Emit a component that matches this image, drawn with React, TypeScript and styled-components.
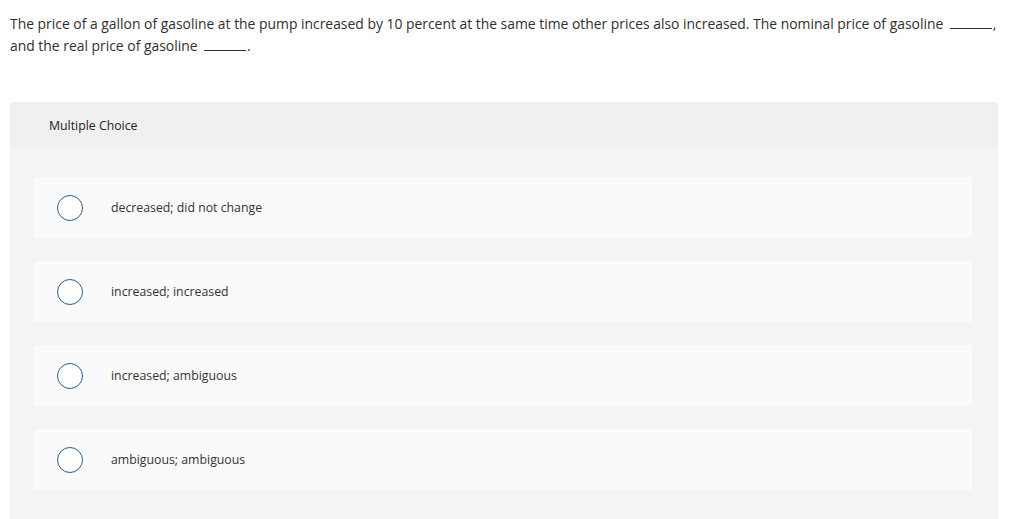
import React from 'react';
import styled, { createGlobalStyle } from 'styled-components';

const Global = createGlobalStyle`
    body {
        margin: 0;
        background: #fff;
        font-family: "Open Sans", "Liberation Sans", sans-serif;
        color: #333;
    }
`
const Page = styled.main`
    padding: 13px 10px 0 10px;
`
const Question = styled.p`
    margin: 0;
    font-size: 13.9px;
    line-height: 22px;
    color: #2f2f2f;
`
const Blank = styled.span`
    display: inline-block;
    width: 42px;
    border-bottom: 1px solid #333;
    margin: 0 1px 0 3px;
`
const Panel = styled.section`
    margin-top: 45px;
    width: 988px;
    background-color: #f4f4f4;
    padding-bottom: 40px;
`
const Header = styled.div`
    height: 46px;
    background-color: #f0f0f0;
    display: flex;
    align-items: center;
    padding-left: 39px;
    font-size: 12.3px;
    color: #222;
`
const Options = styled.ul`
    list-style: none;
    margin: 0;
    padding: 29px 26px 0 24px;
    display: flex;
    flex-direction: column;
    gap: 23px;
`
const Option = styled.li`
    height: 61px;
    background-color: #fafafa;
    border-radius: 3px;
    display: flex;
    align-items: center;
    padding-left: 23px;
    font-size: 12.3px;
    color: #333;
`
const Radio = styled.span`
    width: 24px;
    height: 24px;
    border-radius: 50%;
    border: 1.4px solid #2c5b8f;
    background: #fff;
    margin-right: 28px;
    flex-shrink: 0;
`

const answers = [
    'decreased; did not change',
    'increased; increased',
    'increased; ambiguous',
    'ambiguous; ambiguous',
]

export default function App() {
    return (
        <>
            <Global />
            <Page>
                <Question>
                    The price of a gallon of gasoline at the pump increased by 10 percent at the same time other prices also increased. The nominal price of gasoline <Blank />,
                    <br />
                    and the real price of gasoline <Blank />.
                </Question>
                <Panel>
                    <Header>Multiple Choice</Header>
                    <Options>
                        {answers.map((a) => (
                            <Option key={a}>
                                <Radio />
                                {a}
                            </Option>
                        ))}
                    </Options>
                </Panel>
            </Page>
        </>
    );
}
